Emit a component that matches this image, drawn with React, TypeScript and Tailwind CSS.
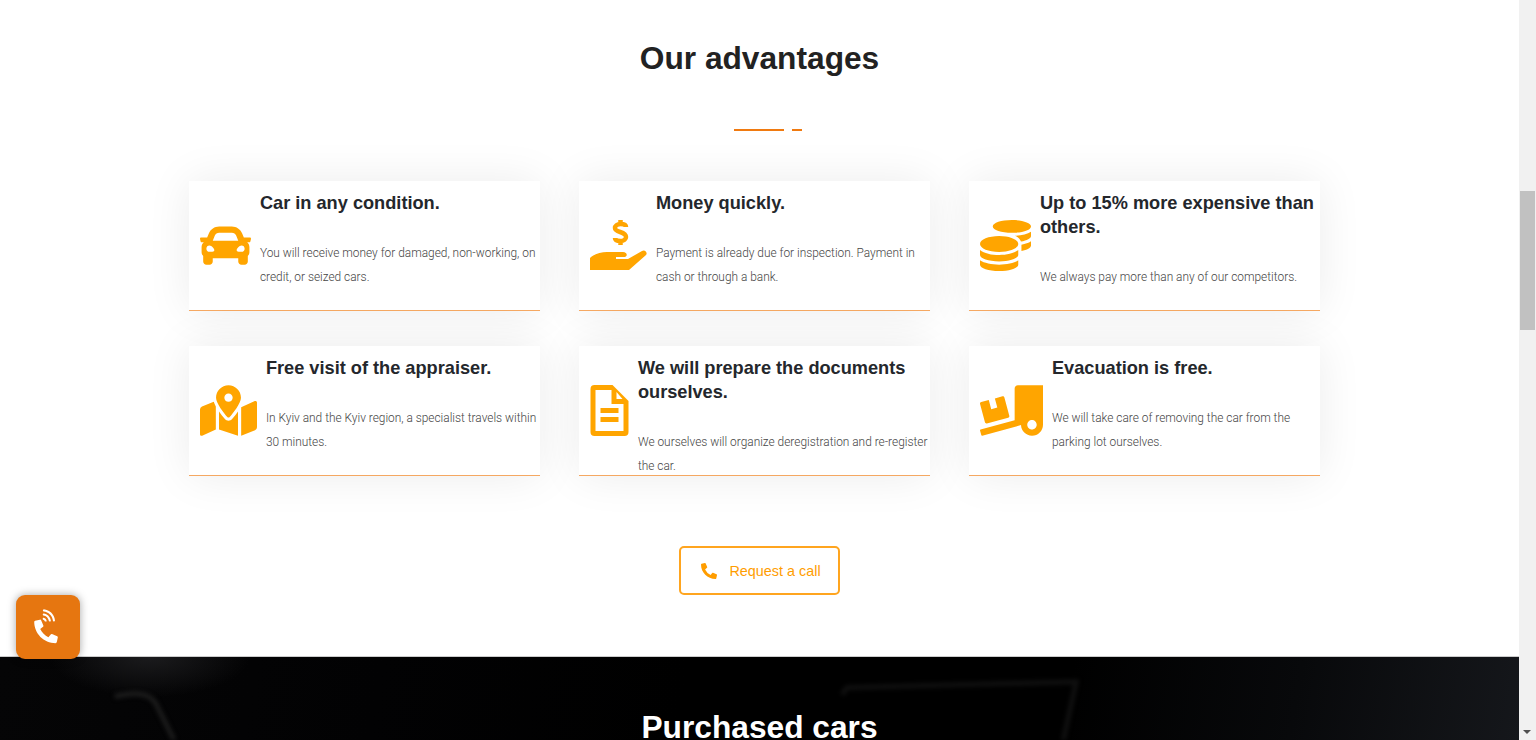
import { FaCar, FaCoins, FaMapMarkedAlt, FaTruckLoading, FaPhoneAlt, FaPhoneVolume } from "react-icons/fa";

function HandIcon({ className }) {
  return (
    <svg className={className} viewBox="0 0 57 51" fill="currentColor">
      <path d="M0 38C4 34 11 32 17 32H33C37 32 38 36 35 37H26V39H38L52 31C55 29 58 33 56 35L39 50H0Z" />
      <path d="M36 7C36 5 34 4 30.5 4C27 4 25 6 25 8C25 13 36 11 36 17C36 19 34 21 30.5 21C27 21 25 20 25 18M30.5 0V4M30.5 21V25" fill="none" stroke="currentColor" strokeWidth="4.5" />
    </svg>
  );
}

function DocIcon({ className }) {
  return (
    <svg className={className} viewBox="0 0 38 51" fill="currentColor">
      <path fillRule="evenodd" d="M4 0H22L38 16V47A4 4 0 0 1 34 51H4A4 4 0 0 1 0 47V4A4 4 0 0 1 4 0ZM5 5V46H33V19H21V5ZM26 7V14H32Z" />
      <rect x="10" y="23" width="18" height="5" />
      <rect x="10" y="32" width="18" height="5" />
    </svg>
  );
}

const advantages = [
  { icon: FaCar, w: "w-[51px]", title: "Car in any condition.", text: "You will receive money for damaged, non-working, on credit, or seized cars." },
  { icon: HandIcon, w: "w-[57px]", title: "Money quickly.", text: "Payment is already due for inspection. Payment in cash or through a bank." },
  { icon: FaCoins, w: "w-[51px]", title: "Up to 15% more expensive than others.", text: "We always pay more than any of our competitors." },
  { icon: FaMapMarkedAlt, w: "w-[57px]", title: "Free visit of the appraiser.", text: "In Kyiv and the Kyiv region, a specialist travels within 30 minutes." },
  { icon: DocIcon, w: "w-[39px]", title: "We will prepare the documents ourselves.", text: "We ourselves will organize deregistration and re-register the car." },
  { icon: FaTruckLoading, w: "w-[63px]", title: "Evacuation is free.", text: "We will take care of removing the car from the parking lot ourselves." },
];

function Card({ item }) {
  const Icon = item.icon;
  return (
    <div className="flex h-[130px] items-center gap-[8.5px] border-b border-[#f5a862] bg-white pl-[11px] shadow-[0_0_45px_rgba(0,0,0,0.08)]">
      <Icon className={`${item.w} h-[51px] shrink-0 text-[#ffa500]`} />
      <div className="h-full min-w-0 flex-1 pt-[10px]">
        <h3 className="text-[18.2px] leading-[24px] font-bold text-[#24272c]">{item.title}</h3>
        <p className="mt-[26px] font-['Roboto',sans-serif] text-[11.9px] leading-[24px] font-light text-[#444]">{item.text}</p>
      </div>
    </div>
  );
}

export default function App() {
  return (
    <div className="relative flex h-[740px] overflow-hidden bg-white font-['Liberation_Sans',sans-serif]">
      <main className="flex w-[1519px] shrink-0 flex-col">
        <section className="h-[656px] shrink-0">
          <h2 className="pt-[38px] text-center text-[31.7px] leading-[40px] font-bold text-[#222]">Our advantages</h2>
          <div className="mt-[51px] flex justify-center gap-2 pl-[17px]">
            <span className="h-[2px] w-[50px] bg-[#f07a10]" />
            <span className="h-[2px] w-[10px] bg-[#f07a10]" />
          </div>
          <div className="mt-[50px] ml-[189.4px] grid w-[1130.6px] grid-cols-3 gap-x-[39.5px] gap-y-[35px]">
            {advantages.map((item) => (
              <Card key={item.title} item={item} />
            ))}
          </div>
          <div className="mt-[70px] flex justify-center">
            <a className="flex h-[49px] w-[161px] items-center justify-center gap-3 rounded-[5px] border-2 border-[#ffa51f] pl-[3px] text-[14.4px] text-[#ff9d00]">
              <FaPhoneAlt className="h-4 w-4" />
              <span className="pt-[2px]">Request a call</span>
            </a>
          </div>
        </section>
        <section className="relative h-[84px] shrink-0 overflow-hidden border-t border-[#ccc] bg-[radial-gradient(ellipse_100px_40px_at_150px_0,#1b1b1d,transparent),linear-gradient(100deg,#050506_0%,#020203_25%,#000_45%,#000_70%,#08090b_85%,#15171b_100%)]">
          <svg className="absolute inset-0 h-full w-full blur-[2px]" viewBox="0 0 1519 84" fill="none">
            <path d="M107 40 C125 36 140 35 148 46 L167 84" stroke="#1c1c1c" strokeWidth="5" />
            <path d="M843 38 L848 31 L1080 25 L1067 84" stroke="#101010" strokeWidth="5" />
          </svg>
          <h2 className="relative pt-[50px] text-center text-[31.7px] leading-[40px] font-bold text-white">Purchased cars</h2>
        </section>
      </main>
      <aside className="relative flex w-[17px] shrink-0 flex-col bg-[#f1f1f1]">
        <div className="mt-[191px] ml-[1px] h-[139px] w-[15px] bg-[#c1c1c1]" />
        <svg className="absolute bottom-[4px] left-[4px] h-2 w-2" viewBox="0 0 8 8"><path d="M0 2h8L4 6z" fill="#505050" /></svg>
      </aside>
      <button className="absolute top-[595px] left-4 flex h-16 w-16 items-center justify-center rounded-[9px] bg-[#e67610] shadow-[0_0_8px_rgba(0,0,0,0.35)]">
        <FaPhoneVolume className="h-[33px] w-[33px] -rotate-45 text-white" />
      </button>
    </div>
  );
}
